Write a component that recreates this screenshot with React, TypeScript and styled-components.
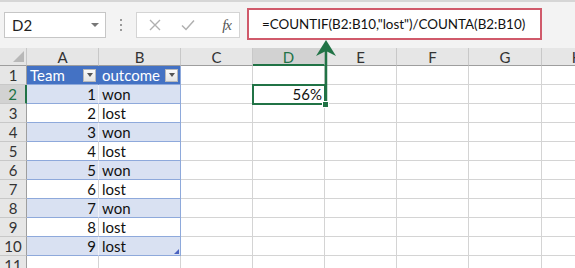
import React from 'react'
import styled, { createGlobalStyle } from 'styled-components'

const GlobalStyle = createGlobalStyle`
  html, body {
    margin: 0;
    padding: 0;
    background: #ffffff;
  }
  body {
    font-family: Lato, "Liberation Sans", sans-serif;
    overflow: hidden;
  }
`

const Window = styled.div`
  position: relative;
  width: 575px;
  height: 268px;
  overflow: hidden;
  background: #ffffff;
`

const FormulaBar = styled.div`
  height: 48px;
  box-sizing: border-box;
  border-top: 2px solid #d6d6d6;
  background: #f3f3f3;
  display: flex;
  align-items: flex-start;
  padding: 6px 0 0 4px;
`

const NameBox = styled.div`
  width: 102px;
  height: 26px;
  margin-top: 4px;
  box-sizing: border-box;
  background: #ffffff;
  border: 1px solid #c6c6c6;
  display: flex;
  align-items: center;
  justify-content: space-between;
  padding: 0 6px 0 7px;
  font-size: 15px;
  color: #222;
`

const DropCaret = styled.span`
  width: 0;
  height: 0;
  border-left: 4px solid transparent;
  border-right: 4px solid transparent;
  border-top: 4px solid #777;
`

const Grip = styled.div`
  width: 30px;
  height: 26px;
  margin-top: 4px;
  display: flex;
  flex-direction: column;
  align-items: center;
  justify-content: center;
  gap: 3px;
  span {
    width: 2px;
    height: 2px;
    background: #9a9a9a;
  }
`

const ActionBox = styled.div`
  width: 104px;
  height: 26px;
  margin-top: 4px;
  box-sizing: border-box;
  background: #ffffff;
  border: 1px solid #d4d4d4;
  display: flex;
  align-items: center;
  padding: 0 8px 0 12px;
  gap: 20px;
`

const ActionIcon = styled.span`
  display: flex;
  align-items: center;
  color: #b0b0b0;
`

const Fx = styled.span`
  font-family: "Liberation Serif", serif;
  font-style: italic;
  font-size: 15px;
  color: #555;
  margin-left: auto;
  letter-spacing: -1px;
`

const FormulaInput = styled.div`
  width: 295px;
  height: 32px;
  margin-left: 7px;
  box-sizing: border-box;
  border: 2px solid #d05a6b;
  background: #ffffff;
  display: flex;
  align-items: center;
  padding-left: 13px;
  font-size: 13.4px;
  color: #111;
  white-space: nowrap;
`

const Sheet = styled.div`
  display: grid;
  grid-template-columns: 27px 72px 82px 72px 72px 72px 72px 73px 72px;
  grid-template-rows: 18px repeat(11, 19px);
`

const Corner = styled.div`
  background: #e6e6e6;
  border-right: 1px solid #c8c8c8;
  border-bottom: 1px solid #9e9e9e;
  box-sizing: border-box;
  display: flex;
  align-items: flex-end;
  justify-content: flex-end;
  padding: 0 2px 3px 0;
  &::after {
    content: '';
    width: 0;
    height: 0;
    border-left: 11px solid transparent;
    border-bottom: 11px solid #b8b8b8;
  }
`

const ColHead = styled.div<{ $active?: boolean }>`
  box-sizing: border-box;
  background: ${({ $active }) => ($active ? '#d2d2d2' : '#e6e6e6')};
  border-right: 1px solid #c8c8c8;
  border-bottom: ${({ $active }) => ($active ? '2px solid #217346' : '1px solid #9e9e9e')};
  color: ${({ $active }) => ($active ? '#217346' : '#333')};
  font-size: 15px;
  line-height: 18px;
  text-align: center;
  overflow: hidden;
`

const RowHead = styled.div<{ $active?: boolean }>`
  box-sizing: border-box;
  background: ${({ $active }) => ($active ? '#d2d2d2' : '#e6e6e6')};
  border-right: ${({ $active }) => ($active ? '2px solid #217346' : '1px solid #9e9e9e')};
  border-bottom: 1px solid #c8c8c8;
  color: ${({ $active }) => ($active ? '#217346' : '#333')};
  font-size: 15px;
  line-height: 19px;
  text-align: center;
`

type Band = 'head' | 'shade' | 'plain' | undefined

const bandFill = (band: Band) =>
  band === 'head' ? '#4472c4' : band === 'shade' ? '#d9e1f2' : '#ffffff'

const Cell = styled.div<{ $band?: Band; $right?: boolean; $edge?: boolean }>`
  position: relative;
  box-sizing: border-box;
  background: ${({ $band }) => bandFill($band)};
  border-right: 1px solid
    ${({ $band, $edge }) =>
      $edge ? '#8ea9db' : $band === 'shade' ? '#eef1f8' : $band === 'head' ? '#4472c4' : '#d4d4d4'};
  border-bottom: 1px solid ${({ $band }) => ($band ? '#8ea9db' : '#d4d4d4')};
  color: ${({ $band }) => ($band === 'head' ? '#ffffff' : '#111')};
  font-size: 15px;
  line-height: 18px;
  padding: 0 2px 0 3px;
  white-space: nowrap;
  display: flex;
  align-items: center;
  justify-content: ${({ $right }) => ($right ? 'flex-end' : 'space-between')};
`

const FilterButton = styled.span`
  width: 13px;
  height: 13px;
  box-sizing: border-box;
  background: linear-gradient(#fafafa, #e4e4e4);
  border: 1px solid #b9b9b9;
  display: flex;
  align-items: center;
  justify-content: center;
  &::after {
    content: '';
    width: 0;
    height: 0;
    border-left: 3.5px solid transparent;
    border-right: 3.5px solid transparent;
    border-top: 4px solid #555;
  }
`

const ResizeMark = styled.span`
  position: absolute;
  right: 1px;
  bottom: 1px;
  width: 0;
  height: 0;
  border-left: 5px solid transparent;
  border-bottom: 5px solid #4a62c0;
`

const Selection = styled.div`
  position: absolute;
  left: 252px;
  top: 84px;
  width: 74px;
  height: 21px;
  box-sizing: border-box;
  border: 2px solid #217346;
  pointer-events: none;
`

const FillHandle = styled.span`
  position: absolute;
  right: -5px;
  bottom: -5px;
  width: 7px;
  height: 7px;
  box-sizing: border-box;
  background: #217346;
  border: 1px solid #ffffff;
`

const Pointer = styled.svg`
  position: absolute;
  left: 0;
  top: 0;
  pointer-events: none;
`

const columns = ['A', 'B', 'C', 'D', 'E', 'F', 'G', 'H']
const outcomes = ['won', 'lost', 'won', 'lost', 'won', 'lost', 'won', 'lost', 'lost']

const App = () => {
  const rows = Array.from({ length: 11 }, (_, i) => i + 1)

  const renderCell = (row: number, col: string) => {
    const key = `${col}${row}`
    if ((col === 'A' || col === 'B') && row <= 10) {
      const band: Band = row === 1 ? 'head' : row % 2 === 0 ? 'shade' : 'plain'
      if (row === 1) {
        return (
          <Cell key={key} $band={band} $edge={col === 'B'}>
            {col === 'A' ? 'Team' : 'outcome'}
            <FilterButton />
          </Cell>
        )
      }
      if (col === 'A') {
        return (
          <Cell key={key} $band={band} $right>
            {row - 1}
          </Cell>
        )
      }
      return (
        <Cell key={key} $band={band} $edge>
          {outcomes[row - 2]}
          {row === 10 && <ResizeMark />}
        </Cell>
      )
    }
    if (col === 'D' && row === 2) {
      return (
        <Cell key={key} $right>
          56%
        </Cell>
      )
    }
    return <Cell key={key} />
  }

  return (
    <Window>
      <GlobalStyle />
      <FormulaBar>
        <NameBox>
          D2
          <DropCaret />
        </NameBox>
        <Grip>
          <span />
          <span />
          <span />
        </Grip>
        <ActionBox>
          <ActionIcon>
            <svg width="12" height="12" viewBox="0 0 12 12">
              <path d="M1 1 L11 11 M11 1 L1 11" stroke="currentColor" strokeWidth="1.4" />
            </svg>
          </ActionIcon>
          <ActionIcon>
            <svg width="14" height="12" viewBox="0 0 14 12">
              <path d="M1 6.5 L5 10.5 L13 1.5" stroke="currentColor" strokeWidth="1.5" fill="none" />
            </svg>
          </ActionIcon>
          <Fx>fx</Fx>
        </ActionBox>
        <FormulaInput>=COUNTIF(B2:B10,"lost")/COUNTA(B2:B10)</FormulaInput>
      </FormulaBar>
      <Sheet>
        <Corner />
        {columns.map((c) => (
          <ColHead key={c} $active={c === 'D'}>
            {c}
          </ColHead>
        ))}
        {rows.map((r) => (
          <React.Fragment key={r}>
            <RowHead $active={r === 2}>{r}</RowHead>
            {columns.map((c) => renderCell(r, c))}
          </React.Fragment>
        ))}
      </Sheet>
      <Selection>
        <FillHandle />
      </Selection>
      <Pointer width="575" height="268" viewBox="0 0 575 268">
        <path d="M326 101 L326 50" stroke="#217346" strokeWidth="2.5" />
        <path d="M326 40 L336 56 L326 51 L316 56 Z" fill="#217346" />
      </Pointer>
    </Window>
  )
}

export default App
